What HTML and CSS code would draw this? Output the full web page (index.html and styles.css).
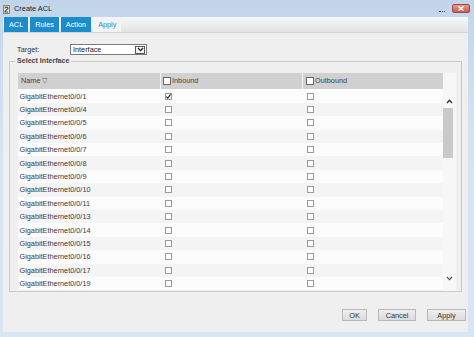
FILE: index.html
```html
<!DOCTYPE html>
<html>
<head>
<meta charset="utf-8">
<link rel="stylesheet" href="styles.css">
</head>
<body>
<div class="window">
  <div class="titlebar">
    <svg class="app-icon" viewBox="0 0 7 9" width="7" height="9">
      <rect x="0.5" y="0.5" width="6" height="8" fill="#e9e2b8" stroke="#8a8a6a" stroke-width="1"/>
      <path d="M2 3.2 C2 1.8 5 1.8 5 3.2 C5 4.6 2 4.8 2 7 L5 7" fill="none" stroke="#2d4f7a" stroke-width="1.1"/>
    </svg>
    <span class="title">Create ACL</span>
    <span class="min"></span>
    <span class="close">
      <svg viewBox="0 0 6 5" width="6" height="5"><path d="M0.5 0.5 L5.5 4.5 M5.5 0.5 L0.5 4.5" stroke="#fff" stroke-width="1.3"/></svg>
    </span>
  </div>
  <div class="frame">
    <div class="main">
      <div class="tabs">
        <div class="tab">ACL</div>
        <div class="tab">Rules</div>
        <div class="tab">Action</div>
        <div class="tab active">Apply</div>
      </div>
      <div class="panel">
        <div class="target-row">
          <span class="label">Target:</span>
          <div class="select">
            <span class="select-text">Interface</span>
            <span class="select-btn">
              <svg viewBox="0 0 7 5" width="7" height="5"><path d="M1 1 L3.5 3.6 L6 1" fill="none" stroke="#222" stroke-width="1.3"/></svg>
            </span>
          </div>
        </div>
        <fieldset class="group">
          <legend>Select Interface</legend>
          <div class="grid-wrap">
            <div class="grid">
              <div class="row head">
                <div class="cell c-name">Name <span class="sort">&#9661;</span></div>
                <div class="cell c-in"><span class="hbox"></span>Inbound</div>
                <div class="cell c-out"><span class="hbox"></span>Outbound</div>
              </div>
              <div class="rows">
                <div class="row"><div class="cell c-name">GigabitEthernet0/0/1</div><div class="cell c-in"><span class="cbox checked"><svg viewBox="0 0 7 7" width="7" height="7"><path d="M1.3 3.6 L2.8 5.2 L5.6 1.4" fill="none" stroke="#222" stroke-width="1.1"/></svg></span></div><div class="cell c-out"><span class="cbox"></span></div></div>
                <div class="row"><div class="cell c-name">GigabitEthernet0/0/4</div><div class="cell c-in"><span class="cbox"></span></div><div class="cell c-out"><span class="cbox"></span></div></div>
                <div class="row"><div class="cell c-name">GigabitEthernet0/0/5</div><div class="cell c-in"><span class="cbox"></span></div><div class="cell c-out"><span class="cbox"></span></div></div>
                <div class="row"><div class="cell c-name">GigabitEthernet0/0/6</div><div class="cell c-in"><span class="cbox"></span></div><div class="cell c-out"><span class="cbox"></span></div></div>
                <div class="row"><div class="cell c-name">GigabitEthernet0/0/7</div><div class="cell c-in"><span class="cbox"></span></div><div class="cell c-out"><span class="cbox"></span></div></div>
                <div class="row"><div class="cell c-name">GigabitEthernet0/0/8</div><div class="cell c-in"><span class="cbox"></span></div><div class="cell c-out"><span class="cbox"></span></div></div>
                <div class="row"><div class="cell c-name">GigabitEthernet0/0/9</div><div class="cell c-in"><span class="cbox"></span></div><div class="cell c-out"><span class="cbox"></span></div></div>
                <div class="row"><div class="cell c-name">GigabitEthernet0/0/10</div><div class="cell c-in"><span class="cbox"></span></div><div class="cell c-out"><span class="cbox"></span></div></div>
                <div class="row"><div class="cell c-name">GigabitEthernet0/0/11</div><div class="cell c-in"><span class="cbox"></span></div><div class="cell c-out"><span class="cbox"></span></div></div>
                <div class="row"><div class="cell c-name">GigabitEthernet0/0/13</div><div class="cell c-in"><span class="cbox"></span></div><div class="cell c-out"><span class="cbox"></span></div></div>
                <div class="row"><div class="cell c-name">GigabitEthernet0/0/14</div><div class="cell c-in"><span class="cbox"></span></div><div class="cell c-out"><span class="cbox"></span></div></div>
                <div class="row"><div class="cell c-name">GigabitEthernet0/0/15</div><div class="cell c-in"><span class="cbox"></span></div><div class="cell c-out"><span class="cbox"></span></div></div>
                <div class="row"><div class="cell c-name">GigabitEthernet0/0/16</div><div class="cell c-in"><span class="cbox"></span></div><div class="cell c-out"><span class="cbox"></span></div></div>
                <div class="row"><div class="cell c-name">GigabitEthernet0/0/17</div><div class="cell c-in"><span class="cbox"></span></div><div class="cell c-out"><span class="cbox"></span></div></div>
                <div class="row"><div class="cell c-name">GigabitEthernet0/0/19</div><div class="cell c-in"><span class="cbox"></span></div><div class="cell c-out"><span class="cbox"></span></div></div>
              </div>
            </div>
            <div class="scrollbar">
              <svg class="arrow-up" viewBox="0 0 7 5" width="7" height="5"><path d="M1 4 L3.5 1.3 L6 4" fill="none" stroke="#333" stroke-width="1.4"/></svg>
              <div class="thumb"></div>
              <div class="track"></div>
              <svg class="arrow-down" viewBox="0 0 7 5" width="7" height="5"><path d="M1 1 L3.5 3.7 L6 1" fill="none" stroke="#555" stroke-width="1.2"/></svg>
            </div>
          </div>
        </fieldset>
        <div class="buttons">
          <div class="btn btn-ok">OK</div>
          <div class="btn btn-cancel">Cancel</div>
          <div class="btn btn-apply">Apply</div>
        </div>
      </div>
    </div>
  </div>
</div>
</body>
</html>
```

FILE: styles.css
```css
* { box-sizing: border-box; }
html, body { margin: 0; padding: 0; }
body {
  width: 474px;
  height: 337px;
  overflow: hidden;
  font-family: "Liberation Sans", Arial, sans-serif;
  font-size: 7.3px;
  color: #3a3a3a;
  background: #cfdff0;
}
.window {
  width: 474px;
  height: 337px;
  display: flex;
  flex-direction: column;
  background: linear-gradient(#c1d5ea, #d4e3f2 40%, #d8e5f2);
}
.titlebar {
  height: 17px;
  display: flex;
  align-items: center;
  padding: 0 4px 0 3px;
}
.app-icon { margin-right: 4px; margin-top: 1px; }
.title { flex: 1; color: #1d1d1d; font-size: 7.4px; }
.min {
  width: 6px;
  height: 1px;
  border-top: 1px dotted #445;
  margin-top: 6px;
  margin-right: 7px;
}
.close {
  width: 18px;
  height: 9px;
  border-radius: 2px;
  background: linear-gradient(#e49a90, #c95a4e);
  border: 1px solid #a0463e;
  display: flex;
  align-items: center;
  justify-content: center;
}
.frame {
  flex: 1;
  display: flex;
  padding: 0 6px 5px 3px;
}
.main {
  flex: 1;
  display: flex;
  flex-direction: column;
  background: #eeeeee;
}
.tabs {
  height: 16px;
  display: flex;
  gap: 2px;
  padding-left: 1px;
  background: linear-gradient(#f7f7f7, #e3e3e3);
  border-bottom: 1px solid #d3d3d3;
}
.tab {
  height: 15px;
  padding: 0 5px;
  display: flex;
  align-items: center;
  background: #1d8ccb;
  color: #ffffff;
}
.tab.active {
  background: #f1f3f5;
  color: #2a8cca;
}
.panel {
  flex: 1;
  padding: 11px 6px 11px 6px;
  background: #efefef;
}
.target-row {
  height: 11px;
  display: flex;
  align-items: center;
  margin-left: 8px;
}
.label { width: 53px; color: #333; }
.select {
  width: 77px;
  height: 11px;
  border: 1px solid #7a7a7a;
  background: #ffffff;
  display: flex;
  align-items: center;
  justify-content: space-between;
  padding: 0 1px 0 2px;
}
.select-text { color: #222; }
.select-btn {
  width: 10px;
  height: 8px;
  border: 1px solid #555;
  display: flex;
  align-items: center;
  justify-content: center;
  background: #f4f4f4;
}
.group {
  margin: 2px 0 0 0;
  padding: 7px 5px 0 8px;
  border: 1px solid #c9c9c9;
  min-width: 0;
}
.group legend {
  margin-left: -3px;
  padding: 0 2px;
  line-height: 9px;
  height: 9px;
  font-weight: bold;
  font-size: 7.1px;
  color: #444;
}
.grid-wrap {
  height: 218px;
  display: flex;
  overflow: hidden;
}
.grid {
  width: 425px;
  display: flex;
  flex-direction: column;
}
.row {
  display: flex;
  height: 13.4px;
  align-items: center;
}
.row.head {
  height: 15px;
  background: #d0d0d0;
  color: #444;
  border-bottom: 1.5px solid #ffffff;
  height: 16.5px;
}
.cell {
  height: 100%;
  display: flex;
  align-items: center;
}
.c-name { width: 142px; padding-left: 1.5px; }
.c-in { width: 142px; border-left: 1px solid transparent; padding-left: 4px; }
.c-out { width: 141px; border-left: 1px solid transparent; padding-left: 4px; }
.head .c-name { padding-left: 3px; }
.head .c-in, .head .c-out { border-left-color: #f4f4f4; padding-left: 2px; }
.head .c-out { padding-left: 3px; }
.sort { font-size: 7px; color: #666; margin-left: 2px; }
.hbox {
  width: 8px;
  height: 8px;
  border: 1px solid #666;
  background: #fff;
  margin-right: 1px;
}
.rows { flex: 1; display: flex; flex-direction: column; }
.rows .row { background: #fcfcfc; }
.rows .row:nth-child(even) { background: #f4f4f4; }
.cbox {
  width: 7px;
  height: 7px;
  border: 1px solid #9a9a9a;
  background: #ffffff;
  display: flex;
  align-items: center;
  justify-content: center;
}
.cbox svg { flex: none; }
.scrollbar {
  width: 13px;
  display: flex;
  flex-direction: column;
  align-items: flex-start;
  background: #f7f7f7;
  padding-top: 26px;
}
.arrow-up { margin-left: 3px; }
.thumb {
  width: 10px;
  height: 50px;
  background: #c9c9c9;
  margin-top: 4px;
}
.track { flex: 1; }
.arrow-down { margin-left: 3px; margin-bottom: 10px; }
.buttons {
  display: flex;
  justify-content: flex-end;
  gap: 11px;
  margin-top: 17px;
  margin-right: -4px;
}
.btn {
  height: 12px;
  display: flex;
  align-items: center;
  justify-content: center;
  background: linear-gradient(#ededed, #dcdcdc);
  border: 1px solid #b9b9b9;
  color: #333;
}
.btn-ok { width: 25px; }
.btn-cancel { width: 38px; }
.btn-apply { width: 39px; }
```
